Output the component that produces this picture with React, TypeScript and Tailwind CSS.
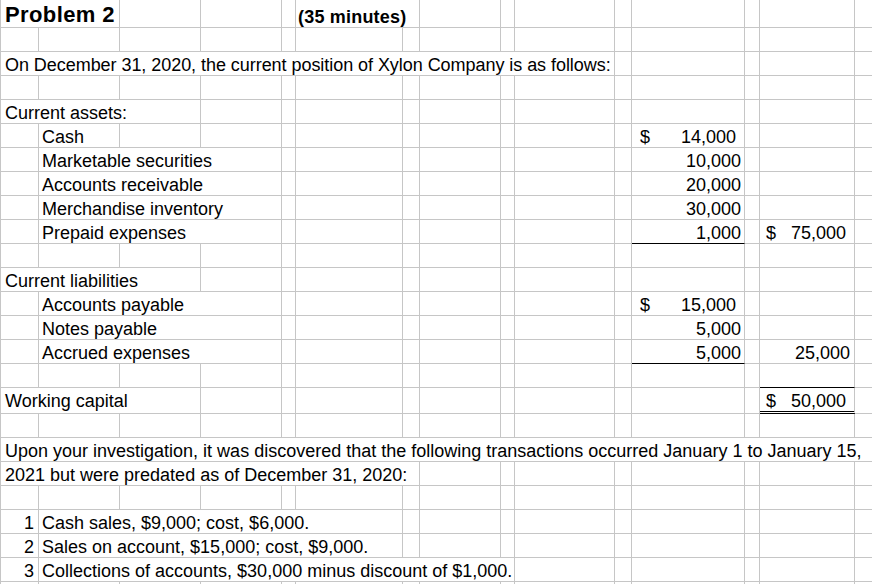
import React from "react"

const COLS = 15
const GRID =
  "grid grid-cols-[38px_81px_81px_81px_14px_107px_17px_81px_14px_100px_17px_113px_15px_95px_81px]"

const SPAN: Record<number, string> = {
  1: "col-span-1",
  2: "col-span-2",
  3: "col-span-3",
  5: "col-span-5",
  7: "col-span-7",
  8: "col-span-8",
  10: "col-span-10",
  15: "col-span-15",
}

type Cell = { col: number; span?: number; content?: React.ReactNode; cls?: string; bottom?: string }

function Row({ h = "h-[24px]", cells = [] }: { h?: string; cells?: Cell[] }) {
  const out: React.ReactNode[] = []
  let c = 0
  const sorted = [...cells].sort((a, b) => a.col - b.col)
  let i = 0
  while (c < COLS) {
    const cell = sorted[i]
    if (cell && cell.col === c) {
      const span = cell.span ?? 1
      out.push(
        <div
          key={c}
          className={`${SPAN[span]} flex items-end whitespace-nowrap border-r border-r-[#c6c6c6] ${
            cell.bottom ?? "border-b border-b-[#c6c6c6]"
          } ${cell.cls ?? ""}`}
        >
          {cell.content}
        </div>
      )
      c += span
      i++
    } else {
      out.push(<div key={c} className="col-span-1 border-r border-r-[#c6c6c6] border-b border-b-[#c6c6c6]" />)
      c++
    }
  }
  return <div className={`${GRID} ${h}`}>{out}</div>
}

function Money({ value, dollar, left = "pl-[8px]" }: { value: string; dollar?: boolean; left?: string }) {
  return (
    <div className={`flex w-full justify-between ${dollar ? `${left} pr-[8px]` : "pr-[3px]"}`}>
      <span>{dollar ? "$" : ""}</span>
      <span>{value}</span>
    </div>
  )
}

const label = (text: string) => <span className="pl-[3px]">{text}</span>
const heading = (text: string) => <span className="pl-[4px]">{text}</span>
const num = (n: string) => <span className="w-full pr-[4px] text-right">{n}</span>

export default function App() {
  return (
    <div className="h-[584px] w-[872px] overflow-hidden bg-white font-['Liberation_Sans',Arial,sans-serif] text-[18px] leading-[20px] text-black">
      <div className="w-[936px] border-l border-l-[#c6c6c6]">
        <Row
          h="h-[28px]"
          cells={[
            {
              col: 0,
              span: 2,
              content: <span className="pl-[4px] text-[22px] font-bold leading-[25px] tracking-[0.4px]">Problem 2</span>,
            },
            { col: 5, span: 2, content: <span className="pl-[2px] font-bold tracking-[0.2px]">(35 minutes)</span> },
          ]}
        />
        <Row />
        <Row
          cells={[
            {
              col: 0,
              span: 10,
              content: (
                <span className="pl-[4px] tracking-[-0.05px]">
                  On December 31, 2020, the current position of Xylon Company is as follows:
                </span>
              ),
            },
          ]}
        />
        <Row />
        <Row cells={[{ col: 0, span: 3, content: heading("Current assets:") }]} />
        <Row
          cells={[
            { col: 1, content: label("Cash") },
            { col: 11, content: <Money value="14,000" dollar /> },
          ]}
        />
        <Row
          cells={[
            { col: 1, span: 3, content: label("Marketable securities") },
            { col: 11, content: <Money value="10,000" /> },
          ]}
        />
        <Row
          cells={[
            { col: 1, span: 3, content: label("Accounts receivable") },
            { col: 11, content: <Money value="20,000" /> },
          ]}
        />
        <Row
          cells={[
            { col: 1, span: 3, content: label("Merchandise inventory") },
            { col: 11, content: <Money value="30,000" /> },
          ]}
        />
        <Row
          cells={[
            { col: 1, span: 3, content: label("Prepaid expenses") },
            { col: 11, content: <Money value="1,000" />, bottom: "border-b border-b-black" },
            { col: 13, content: <Money value="75,000" dollar left="pl-[6px]" /> },
          ]}
        />
        <Row />
        <Row cells={[{ col: 0, span: 3, content: heading("Current liabilities") }]} />
        <Row
          cells={[
            { col: 1, span: 3, content: label("Accounts payable") },
            { col: 11, content: <Money value="15,000" dollar /> },
          ]}
        />
        <Row
          cells={[
            { col: 1, span: 3, content: label("Notes payable") },
            { col: 11, content: <Money value="5,000" /> },
          ]}
        />
        <Row
          cells={[
            { col: 1, span: 3, content: label("Accrued expenses") },
            { col: 11, content: <Money value="5,000" />, bottom: "border-b border-b-black" },
            { col: 13, content: num("25,000") },
          ]}
        />
        <Row cells={[{ col: 13, bottom: "border-b border-b-black" }]} />
        <Row
          h="h-[26px]"
          cells={[
            { col: 0, span: 3, content: heading("Working capital"), cls: "pb-[2px]" },
            {
              col: 13,
              content: <Money value="50,000" dollar left="pl-[6px]" />,
              bottom: "border-b-[3px] border-double border-b-black",
            },
          ]}
        />
        <Row />
        <Row
          cells={[
            {
              col: 0,
              span: 15,
              content: heading(
                "Upon your investigation, it was discovered that the following transactions occurred January 1 to January 15,"
              ),
            },
          ]}
        />
        <Row cells={[{ col: 0, span: 7, content: heading("2021 but were predated as of December 31, 2020:") }]} />
        <Row />
        <Row
          cells={[
            { col: 0, content: num("1") },
            { col: 1, span: 5, content: label("Cash sales, $9,000; cost, $6,000.") },
          ]}
        />
        <Row
          cells={[
            { col: 0, content: num("2") },
            { col: 1, span: 5, content: label("Sales on account, $15,000; cost, $9,000.") },
          ]}
        />
        <Row
          cells={[
            { col: 0, content: num("3") },
            { col: 1, span: 8, content: label("Collections of accounts, $30,000 minus discount of $1,000.") },
          ]}
        />
        <Row />
      </div>
    </div>
  )
}
